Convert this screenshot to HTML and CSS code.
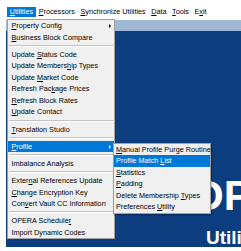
FILE: index.html
```html
<!DOCTYPE html>
<html>
<head>
<meta charset="utf-8">
<link rel="stylesheet" href="styles.css">
</head>
<body>
<div class="menubar">
  <span class="mb-item active"><u>U</u>tilities</span>
  <span class="mb-item"><u>P</u>rocessors</span>
  <span class="mb-item"><u>S</u>ynchronize Utilities</span>
  <span class="mb-item"><u>D</u>ata</span>
  <span class="mb-item"><u>T</u>ools</span>
  <span class="mb-item">E<u>x</u>it</span>
</div>
<div class="app">
  <div class="edge"></div>
  <div class="desktop">
    <div class="titlestrip"></div>
    <div class="canvas">
      <div class="splash">
        <div class="splash-big">OPERA</div>
        <div class="splash-small">Utilities</div>
      </div>
    </div>
  </div>
</div>

<div class="menu dropdown">
  <div class="mi sub"><u>P</u>roperty Config<span class="arrow"></span></div>
  <div class="mi"><u>B</u>usiness Block Compare</div>
  <div class="sep"></div>
  <div class="mi">Update <u>S</u>tatus Code</div>
  <div class="mi">Update Members<u>h</u>ip Types</div>
  <div class="mi">Update <u>M</u>arket Code</div>
  <div class="mi">Refresh Pac<u>k</u>age Prices</div>
  <div class="mi"><u>R</u>efresh Block Rates</div>
  <div class="mi"><u>U</u>pdate Contact</div>
  <div class="sep"></div>
  <div class="mi"><u>T</u>ranslation Studio</div>
  <div class="sep"></div>
  <div class="mi sub hl"><u>P</u>rofile<span class="arrow"></span></div>
  <div class="sep"></div>
  <div class="mi">Imbalance Analysis</div>
  <div class="sep"></div>
  <div class="mi">Exter<u>n</u>al References Update</div>
  <div class="mi"><u>C</u>hange Encryption Key</div>
  <div class="mi">Con<u>v</u>ert Vault CC Information</div>
  <div class="sep"></div>
  <div class="mi">OPERA Schedule<u>r</u></div>
  <div class="mi">Import Dynamic Codes</div>
</div>

<div class="menu submenu">
  <div class="mi"><u>M</u>anual Profile Purge Routine</div>
  <div class="mi hl">Profile Match <u>L</u>ist</div>
  <div class="mi"><u>S</u>tatistics</div>
  <div class="mi"><u>P</u>adding</div>
  <div class="mi">Delete Membership <u>T</u>ypes</div>
  <div class="mi">Preferences <u>U</u>tility</div>
</div>
</body>
</html>
```
FILE: styles.css
```css
html, body {
  margin: 0;
  padding: 0;
}
body {
  width: 241px;
  height: 251px;
  overflow: hidden;
  position: relative;
  background: #ffffff;
  font-family: "Liberation Sans", Arial, sans-serif;
  font-size: 7.25px;
  color: #000;
}
u {
  text-decoration: underline;
  text-underline-offset: 1px;
}
.menubar {
  display: flex;
  height: 13px;
  padding: 7px 0 0 7px;
}
.mb-item {
  height: 10px;
  line-height: 10px;
  padding: 0 2.75px;
  color: #000;
}
.mb-item.active {
  background: #0078d7;
  color: #fff;
}
.app {
  display: flex;
  height: 227px;
  padding-left: 3px;
}
.edge {
  width: 1px;
  background: #c8c8c8;
}
.desktop {
  flex: 1;
  display: flex;
  flex-direction: column;
  margin-left: 3px;
}
.titlestrip {
  height: 11px;
  background: #9fb8d8;
}
.canvas {
  flex: 1;
  background: #0b3d7f;
  overflow: hidden;
}
.splash {
  padding: 143px 0 0 185px;
  color: #fff;
  font-weight: bold;
  white-space: nowrap;
}
.splash-big {
  font-size: 42px;
  line-height: 44px;
}
.splash-small {
  font-size: 19px;
  line-height: 20px;
  margin-top: 10px;
  padding-left: 15px;
}
.menu {
  position: absolute;
  background: #f0f0f0;
  border: 1px solid #a0a0a0;
  box-sizing: border-box;
}
.dropdown {
  left: 7px;
  top: 19px;
  width: 108px;
}
.submenu {
  left: 113px;
  top: 142.5px;
  width: 98px;
  box-shadow: 1px 1px 2px rgba(0, 0, 0, 0.35);
}
.mi {
  position: relative;
  height: 11.55px;
  line-height: 11.55px;
  padding-left: 3.5px;
  white-space: nowrap;
}
.submenu .mi {
  padding-left: 2px;
}
.mi.hl {
  background: #0078d7;
  color: #fff;
}
.arrow {
  position: absolute;
  right: 3px;
  top: 4px;
  width: 0;
  height: 0;
  border-top: 2px solid transparent;
  border-bottom: 2px solid transparent;
  border-left: 2px solid #000;
}
.hl .arrow {
  border-left-color: #fff;
}
.sep {
  height: 5.6px;
  display: flex;
  flex-direction: column;
  justify-content: center;
  padding: 0 1px;
}
.sep::before {
  content: "";
  display: block;
  height: 1px;
  background: #c4c4c4;
}
.sep::after {
  content: "";
  display: block;
  height: 1px;
  background: #ffffff;
}
```
